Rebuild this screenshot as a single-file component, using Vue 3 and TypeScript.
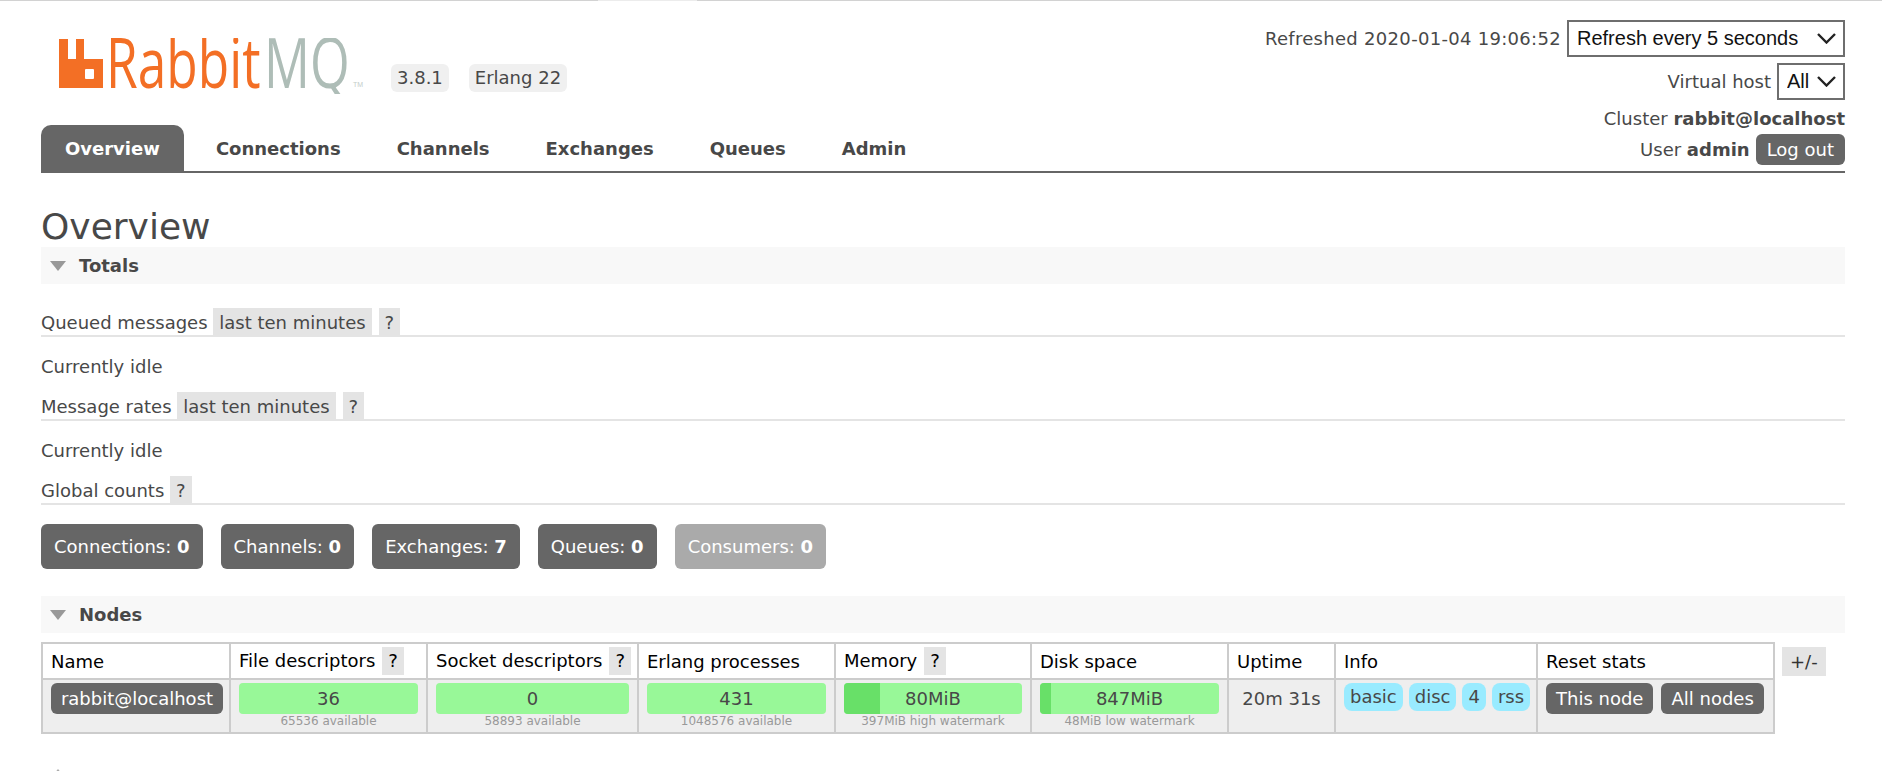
<script setup lang="ts">
interface NodeColumn {
  label: string
  width: number
  help?: boolean
}

interface Gauge {
  value: string
  note: string
  fill: number
}

const tabs = ['Overview', 'Connections', 'Channels', 'Exchanges', 'Queues', 'Admin']

const counters = [
  { label: 'Connections', value: 0 },
  { label: 'Channels', value: 0 },
  { label: 'Exchanges', value: 7 },
  { label: 'Queues', value: 0 },
  { label: 'Consumers', value: 0, muted: true },
]

const columns: NodeColumn[] = [
  { label: 'Name', width: 188 },
  { label: 'File descriptors', width: 197, help: true },
  { label: 'Socket descriptors', width: 211, help: true },
  { label: 'Erlang processes', width: 197 },
  { label: 'Memory', width: 196, help: true },
  { label: 'Disk space', width: 197 },
  { label: 'Uptime', width: 107 },
  { label: 'Info', width: 202 },
  { label: 'Reset stats', width: 237 },
]

const gauges: Gauge[] = [
  { value: '36', note: '65536 available', fill: 0 },
  { value: '0', note: '58893 available', fill: 0 },
  { value: '431', note: '1048576 available', fill: 0 },
  { value: '80MiB', note: '397MiB high watermark', fill: 20 },
  { value: '847MiB', note: '48MiB low watermark', fill: 6 },
]

const info = ['basic', 'disc', '4', 'rss']
</script>

<template>
  <div class="page">
    <header class="header">
      <div class="header-left">
        <div class="brand">
          <svg class="logo" width="310" height="56" viewBox="0 0 310 56" role="img" aria-label="RabbitMQ">
            <path
              fill="#f36f25"
              fill-rule="evenodd"
              d="M0 1H9V21H17V1H25V21H44V50H0ZM27 31Q26 31 26 32V40Q26 41 27 41H34Q35 41 35 40V32Q35 31 34 31Z"
            />
            <text class="logo-text" transform="translate(47 50) scale(.745 1)" fill="#f36f25">Rabbit</text>
            <text class="logo-text" transform="translate(205 50) scale(.74 1)" fill="#aebdb7">MQ</text>
            <text x="294" y="49" font-size="7" font-family="Liberation Sans, sans-serif" fill="#c4cdc9">TM</text>
          </svg>
          <span class="version">3.8.1</span>
          <span class="version">Erlang 22</span>
        </div>
        <nav class="tabs">
          <a
            v-for="(tab, index) in tabs"
            :key="tab"
            class="tab"
            :class="{ 'tab-active': index === 0 }"
          >{{ tab }}</a>
        </nav>
      </div>
      <div class="status">
        <div class="status-row">
          <span class="refreshed">Refreshed 2020-01-04 19:06:52</span>
          <div class="select-wrap select-refresh">
            <select aria-label="Refresh interval">
              <option>Refresh every 5 seconds</option>
            </select>
            <svg width="19" height="11" viewBox="0 0 19 11"><path d="M1 1 9.5 9.5 18 1" fill="none" stroke="#222" stroke-width="2.4" /></svg>
          </div>
        </div>
        <div class="status-row">
          <span>Virtual host</span>
          <div class="select-wrap select-vhost">
            <select aria-label="Virtual host">
              <option>All</option>
            </select>
            <svg width="19" height="11" viewBox="0 0 19 11"><path d="M1 1 9.5 9.5 18 1" fill="none" stroke="#222" stroke-width="2.4" /></svg>
          </div>
        </div>
        <div class="status-row status-cluster">
          <span>Cluster <b>rabbit@localhost</b></span>
        </div>
        <div class="status-row status-user">
          <span>User <b>admin</b></span>
          <button class="dark-button logout" type="button">Log out</button>
        </div>
      </div>
    </header>

    <h1 class="title">Overview</h1>

    <section>
      <h2 class="section-head"><span class="arrow"></span>Totals</h2>
      <div class="totals">
        <h3 class="sub-head">
          Queued messages <span class="tag">last ten minutes</span><span class="tag tag-help">?</span>
        </h3>
        <p class="idle">Currently idle</p>
        <h3 class="sub-head">
          Message rates <span class="tag">last ten minutes</span><span class="tag tag-help">?</span>
        </h3>
        <p class="idle">Currently idle</p>
        <h3 class="sub-head">
          Global counts <span class="tag">?</span>
        </h3>
        <div class="counters">
          <a
            v-for="counter in counters"
            :key="counter.label"
            class="counter"
            :class="{ 'counter-muted': counter.muted }"
          >{{ counter.label }}: <b>{{ counter.value }}</b></a>
        </div>
      </div>
    </section>

    <section class="nodes">
      <h2 class="section-head"><span class="arrow"></span>Nodes</h2>
      <div class="table-row">
        <table class="node-table">
          <colgroup>
            <col v-for="column in columns" :key="column.label" :style="{ width: column.width + 'px' }" />
          </colgroup>
          <thead>
            <tr>
              <th v-for="column in columns" :key="column.label">
                {{ column.label }}<span v-if="column.help" class="tag th-help">?</span>
              </th>
            </tr>
          </thead>
          <tbody>
            <tr>
              <td><button class="dark-button node-name" type="button">rabbit@localhost</button></td>
              <td v-for="gauge in gauges" :key="gauge.note">
                <div class="gauge">
                  <div v-if="gauge.fill" class="gauge-fill" :style="{ width: gauge.fill + '%' }"></div>
                  <span class="gauge-value">{{ gauge.value }}</span>
                </div>
                <div class="gauge-note">{{ gauge.note }}</div>
              </td>
              <td class="uptime">20m 31s</td>
              <td>
                <div class="pills">
                  <span v-for="item in info" :key="item" class="pill">{{ item }}</span>
                </div>
              </td>
              <td>
                <div class="reset">
                  <button class="dark-button" type="button">This node</button>
                  <button class="dark-button" type="button">All nodes</button>
                </div>
              </td>
            </tr>
          </tbody>
        </table>
        <span class="tag columns-toggle">+/-</span>
      </div>
    </section>

    <span class="arrow-next"></span>
  </div>
</template>

<style>
html,
body {
  background: #fff;
  margin: 0;
  overflow: hidden;
}
</style>

<style scoped>
.page {
  background: linear-gradient(to right, #d2d2d2 598px, #ececec 598px 697px, #d2d2d2 697px) top / 100% 1px no-repeat;
  color: #484848;
  font-family: "DejaVu Sans", Verdana, sans-serif;
  font-size: 18px;
  height: 770px;
  overflow: hidden;
  padding: 1px 37px 0 41px;
}

.header {
  border-bottom: 2px solid #666;
  display: flex;
  height: 170px;
  justify-content: space-between;
}

.header-left {
  display: flex;
  flex-direction: column;
  justify-content: space-between;
}

.brand {
  align-items: flex-start;
  display: flex;
  padding: 37px 0 0 18px;
}

.logo {
  flex: none;
  margin-right: 22px;
}

.logo-text {
  font-family: "Open Sans", "Liberation Sans", sans-serif;
  font-size: 69px;
  font-weight: 400;
}

.version {
  background: #f0f0f0;
  border-radius: 6px;
  line-height: 28px;
  margin: 26px 20px 0 0;
  padding: 0 6px;
}

.tabs {
  display: flex;
}

.tab {
  color: #484848;
  font-weight: 700;
  line-height: 44px;
  margin-right: 8px;
  padding: 2px 24px 0;
}

.tab-active {
  background: #666;
  border-radius: 10px 10px 0 0;
  color: #fff;
}

.status {
  align-items: flex-end;
  display: flex;
  flex-direction: column;
  padding-top: 19px;
}

.status-row {
  align-items: center;
  display: flex;
  gap: 6px;
  margin-bottom: 6px;
}

.refreshed {
  letter-spacing: 0.3px;
}

.status-cluster {
  height: 24px;
  margin-bottom: 4px;
}

.select-wrap {
  position: relative;
}

.select-wrap select {
  appearance: none;
  background: #fff;
  border: 2px solid #6e6e6e;
  border-radius: 0;
  color: #111;
  display: block;
  font-family: "Liberation Sans", Arial, sans-serif;
  font-size: 20px;
  height: 37px;
  padding: 0 0 2px 8px;
}

.select-wrap svg {
  pointer-events: none;
  position: absolute;
  right: 9px;
  top: 13px;
}

.select-refresh select {
  width: 278px;
}

.select-vhost select {
  width: 68px;
}

.dark-button {
  background: #666;
  border: 0;
  border-radius: 6px;
  color: #fff;
  font: inherit;
  height: 31px;
  padding: 0 10px;
}

.logout {
  padding: 0 11px;
}

.title {
  font-size: 36px;
  font-weight: 400;
  line-height: 38px;
  margin: 35px 0 1px;
}

.section-head {
  align-items: center;
  background: #f8f8f8;
  display: flex;
  font-size: 18px;
  font-weight: 700;
  height: 37px;
  margin: 0;
}

.arrow {
  border-left: 8px solid transparent;
  border-right: 8px solid transparent;
  border-top: 10px solid #999;
  display: inline-block;
  margin: 0 13px 0 9px;
}

.totals {
  padding-top: 24px;
}

.sub-head {
  border-bottom: 2px solid #e4e4e4;
  font-size: 18px;
  font-weight: 400;
  height: 27px;
  line-height: 29px;
  margin: 0;
}

.tag {
  background: #e4e4e4;
  display: inline-block;
  height: 29px;
  line-height: 29px;
  padding: 0 6px;
}

.tag-help {
  margin-left: 7px;
}

.idle {
  line-height: 20px;
  margin: 0;
  padding: 20px 0 15px;
}

.counters {
  display: flex;
  gap: 18px;
  margin-top: 19px;
}

.counter {
  background: #666;
  border-radius: 6px;
  color: #fff;
  line-height: 45px;
  padding: 0 13px;
}

.counter-muted {
  background: #aaa;
}

.nodes {
  margin-top: 27px;
}

.table-row {
  align-items: flex-start;
  display: flex;
  gap: 7px;
  margin-top: 9px;
}

.node-table {
  border-collapse: collapse;
  table-layout: fixed;
  width: 1732px;
}

.node-table th,
.node-table td {
  border: 2px solid #ccc;
}

.node-table th {
  color: #000;
  font-weight: 400;
  height: 34px;
  padding: 0 8px;
  text-align: left;
  white-space: nowrap;
}

.node-table td {
  background: #eee;
  height: 49px;
  padding: 3px 8px 0;
  text-align: center;
  vertical-align: top;
}

.th-help {
  height: 28px;
  line-height: 28px;
  margin-left: 7px;
}

.node-name {
  display: block;
  padding: 0;
  width: 172px;
}

.gauge {
  background: #98f898;
  border-radius: 4px;
  height: 31px;
  line-height: 31px;
  overflow: hidden;
  position: relative;
}

.gauge-fill {
  background: #68e068;
  bottom: 0;
  left: 0;
  position: absolute;
  top: 0;
}

.gauge-value {
  position: relative;
}

.gauge-note {
  color: #999;
  font-size: 12px;
  line-height: 15px;
}

.uptime {
  line-height: 31px;
}

.pills {
  display: flex;
  gap: 6px;
}

.pill {
  background: #99ebff;
  border-radius: 8px;
  line-height: 28px;
  padding: 0 6px;
}

.reset {
  display: flex;
  gap: 8px;
}

.columns-toggle {
  color: #333;
  margin-top: 5px;
  padding: 0 8px;
}

.arrow-next {
  border-bottom: 10px solid #aaa;
  border-left: 8px solid transparent;
  border-right: 8px solid transparent;
  display: block;
  height: 0;
  margin: 35px 0 0 9px;
  width: 0;
}
</style>
